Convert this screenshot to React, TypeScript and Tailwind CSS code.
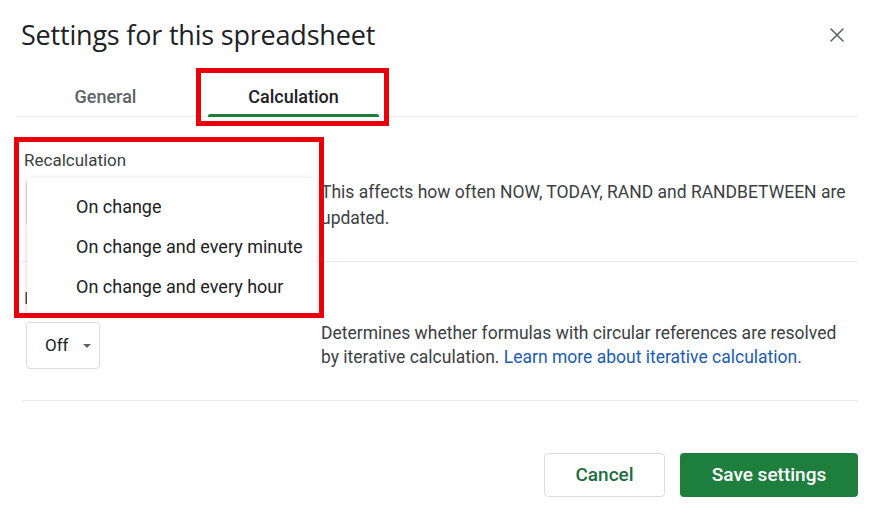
import React from "react";

const recalcOptions = [
  "On change",
  "On change and every minute",
  "On change and every hour",
];

function CloseIcon() {
  return (
    <svg width="16" height="16" viewBox="0 0 16 16" fill="none">
      <path
        d="M2 2L14 14M14 2L2 14"
        stroke="#5f6368"
        strokeWidth="1.6"
        strokeLinecap="round"
      />
    </svg>
  );
}

export default function App() {
  return (
    <div className="relative w-[874px] h-[507px] overflow-hidden bg-white font-['Roboto',sans-serif] text-[#3c4043]">
      {/* Header */}
      <div className="flex items-start justify-between pl-[21px] pr-[28px] pt-[18px]">
        <h1 className="text-[27px] leading-[34px] text-[#202124] font-['Open_Sans','Roboto',sans-serif] tracking-[-0.2px]">
          Settings for this spreadsheet
        </h1>
        <button className="mt-[8px] p-[1px]">
          <CloseIcon />
        </button>
      </div>

      {/* Tabs */}
      <div className="ml-[17px] mr-[16px] mt-[16px] flex gap-[17px] border-b border-[#e8eaed] px-[3px]">
        <div className="flex h-[48px] w-[171px] items-center justify-center pt-[8px] text-[18px] font-medium text-[#5f6368]">
          General
        </div>
        <div className="relative flex h-[48px] w-[171px] items-center justify-center pt-[8px] text-[18px] font-medium text-[#202124]">
          Calculation
          <div className="absolute bottom-[-1px] left-0 right-0 h-[3px] rounded-t-[2px] bg-[#188038]" />
        </div>
      </div>

      {/* Settings rows */}
      <div className="ml-[22px] mr-[16px]">
        <div className="border-b border-[#e8eaed] pt-[33px] pb-[30px]">
          <div className="pl-[2px] text-[17px] leading-[20px]">Recalculation</div>
          <div className="mt-[9px] flex">
            <div className="w-[299px] shrink-0">
              <div className="ml-[4px] h-[47px] w-[220px] rounded-[4px] border border-[#dadce0]" />
            </div>
            <p className="w-[530px] text-[17.5px] leading-[26px]">
              This affects how often NOW, TODAY, RAND and RANDBETWEEN are
              updated.
            </p>
          </div>
        </div>

        <div className="border-b border-[#e8eaed] pt-[26px] pb-[31px]">
          <div className="pl-[2px] text-[17px] leading-[20px]">Iterative calculation</div>
          <div className="mt-[13px] flex">
            <div className="w-[299px] shrink-0 pt-[1px]">
              <div className="ml-[4px] flex h-[47px] w-[74px] items-center rounded-[4px] border border-[#dadce0] pl-[18px] text-[17px] text-[#202124]">
                Off
                <span className="ml-[14px] h-0 w-0 border-x-[4px] border-t-[4px] border-x-transparent border-t-[#5f6368]" />
              </div>
            </div>
            <p className="w-[530px] text-[17.5px] leading-[24px]">
              Determines whether formulas with circular references are resolved
              by iterative calculation.{" "}
              <span className="text-[#1a5bb5]">Learn more about iterative calculation.</span>
            </p>
          </div>
        </div>

        <div className="flex justify-end gap-[15px] pt-[52px]">
          <button className="h-[44px] w-[121px] rounded-[4px] border border-[#dadce0] text-[19px] font-medium text-[#1e6e3f]">
            Cancel
          </button>
          <button className="h-[44px] w-[178px] rounded-[4px] bg-[#1e7e3e] text-[19px] font-medium text-white">
            Save settings
          </button>
        </div>
      </div>

      {/* Open dropdown menu */}
      <div className="absolute left-[27px] top-[178px] w-[290px] bg-white py-[8px] shadow-[0_1px_4px_rgba(60,64,67,0.25)]">
        {recalcOptions.map((opt) => (
          <div key={opt} className="flex h-[40px] items-center pl-[49px] text-[18px] text-[#202124]">
            {opt}
          </div>
        ))}
      </div>

      {/* Annotation boxes */}
      <div className="absolute left-[196px] top-[68px] h-[58px] w-[193px] border-[5px] border-[#e8000b]" />
      <div className="absolute left-[14px] top-[137px] h-[181px] w-[310px] border-[5px] border-[#e8000b]" />
    </div>
  );
}
